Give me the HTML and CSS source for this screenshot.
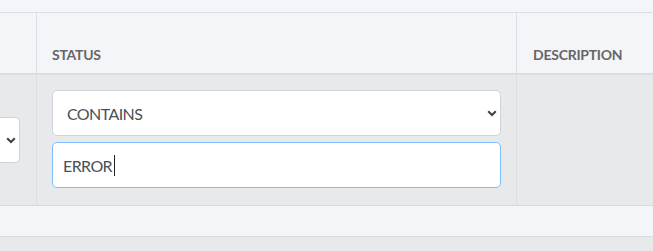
FILE: index.html
```html
<!DOCTYPE html>
<html>
<head>
<meta charset="utf-8">
<link rel="stylesheet" href="styles.css">
</head>
<body>
<div class="table">
  <div class="topband"></div>
  <div class="row head">
    <div class="cell c1"></div>
    <div class="cell c2"><span class="th">STATUS</span></div>
    <div class="cell c3"><span class="th">DESCRIPTION</span></div>
  </div>
  <div class="row body">
    <div class="cell c1 clip">
      <div class="select mini"><span></span><svg class="chev" width="10" height="7" viewBox="0 0 10 7"><path d="M1.2 1.3 L5 5 L8.8 1.3" fill="none" stroke="#3d4148" stroke-width="2"/></svg></div>
    </div>
    <div class="cell c2 stack">
      <div class="select"><span>CONTAINS</span><svg class="chev" width="10" height="7" viewBox="0 0 10 7"><path d="M1.2 1.3 L5 5 L8.8 1.3" fill="none" stroke="#3d4148" stroke-width="2"/></svg></div>
      <div class="input"><span>ERROR</span><span class="caret"></span></div>
    </div>
    <div class="cell c3"></div>
  </div>
  <div class="band"></div>
  <div class="rest"></div>
</div>
</body>
</html>
```
FILE: styles.css
```css
html, body {
  margin: 0;
  padding: 0;
  background: #e8e9eb;
  font-family: "Lato", "Open Sans", sans-serif;
}
.table {
  width: 653px;
  height: 251px;
  overflow: hidden;
  display: flex;
  flex-direction: column;
}
.topband {
  height: 12px;
  background: #f4f5f9;
  border-bottom: 1px solid #dcdee3;
}
.row {
  display: flex;
}
.head {
  height: 60px;
  background: #f4f5f9;
  border-bottom: 1px solid #d9dbe0;
}
.cell {
  box-sizing: border-box;
}
.c1 {
  width: 37px;
  border-right: 1px solid #dcdee3;
}
.c2 {
  width: 480px;
  border-right: 1px solid #dcdee3;
  padding: 0 15px;
}
.c3 {
  flex: 1;
  padding: 0 16px;
}
.head .cell {
  display: flex;
  align-items: flex-end;
  padding-bottom: 10px;
}
.head .c2 {
  padding-left: 15px;
}
.th {
  font-weight: 700;
  font-size: 14px;
  color: #666666;
  letter-spacing: -0.25px;
}
.body {
  height: 130px;
  background: #e8e9eb;
  border-top: 1px solid #dcdee3;
  border-bottom: 1px solid #d7d9de;
}
.clip {
  overflow: hidden;
  display: flex;
  justify-content: flex-end;
  align-items: center;
  padding-right: 16px;
}
.stack {
  display: flex;
  flex-direction: column;
  gap: 6px;
  padding-top: 15px;
}
.select, .input {
  box-sizing: border-box;
  height: 46px;
  background: #fff;
  border: 1px solid #ced4da;
  border-radius: 5px;
  display: flex;
  align-items: center;
  font-size: 16px;
  letter-spacing: -0.6px;
  color: #495057;
  flex-shrink: 0;
}
.select {
  justify-content: space-between;
  padding: 0 3px 0 14px;
}
.mini {
  width: 120px;
}
.input {
  border-color: #80bdff;
  padding: 0 10px;
}
.caret {
  display: inline-block;
  width: 1px;
  height: 21px;
  background: #222;
  margin-left: 2px;
}
.band {
  height: 30px;
  background: #f4f5f9;
  border-bottom: 1px solid #d9dbe0;
}
.rest {
  flex: 1;
  background: #e8e9eb;
}
```
